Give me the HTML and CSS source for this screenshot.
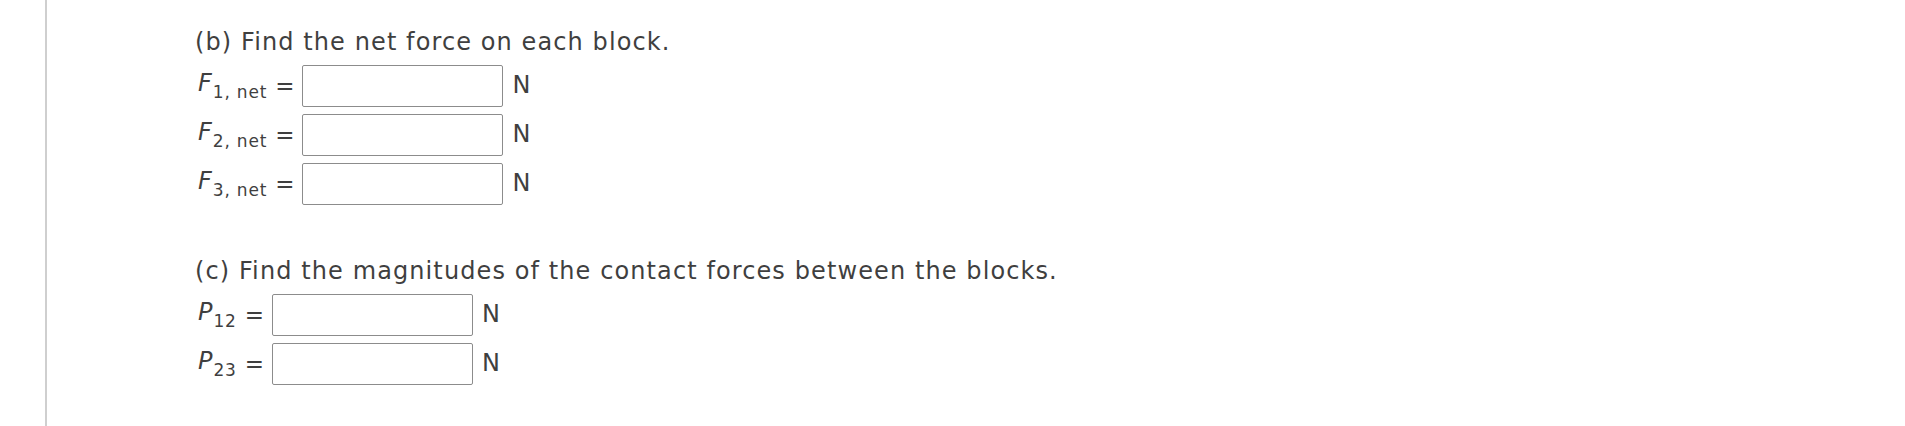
FILE: index.html
```html
<!DOCTYPE html>
<html lang="en">
<head>
<meta charset="utf-8">
<title>Net force on blocks</title>
<link rel="stylesheet" href="styles.css">
</head>
<body>
<div class="sheet">
  <section class="part part-b">
    <p class="prompt">(b) Find the net force on each block.</p>
    <div class="answers">
      <div class="answer">
        <span class="label"><i class="sym">F</i><sub class="idx">1, net</sub><span class="eq">=</span></span>
        <input class="field" type="text">
        <span class="unit">N</span>
      </div>
      <div class="answer">
        <span class="label"><i class="sym">F</i><sub class="idx">2, net</sub><span class="eq">=</span></span>
        <input class="field" type="text">
        <span class="unit">N</span>
      </div>
      <div class="answer">
        <span class="label"><i class="sym">F</i><sub class="idx">3, net</sub><span class="eq">=</span></span>
        <input class="field" type="text">
        <span class="unit">N</span>
      </div>
    </div>
  </section>
  <section class="part part-c">
    <p class="prompt">(c) Find the magnitudes of the contact forces between the blocks.</p>
    <div class="answers">
      <div class="answer">
        <span class="label"><i class="sym">P</i><sub class="idx">12</sub><span class="eq">=</span></span>
        <input class="field" type="text">
        <span class="unit">N</span>
      </div>
      <div class="answer">
        <span class="label"><i class="sym">P</i><sub class="idx">23</sub><span class="eq">=</span></span>
        <input class="field" type="text">
        <span class="unit">N</span>
      </div>
    </div>
  </section>
</div>
</body>
</html>
```

FILE: styles.css
```css
html, body {
  margin: 0;
  padding: 0;
  background: #ffffff;
}

body {
  font-family: "DejaVu Sans", Verdana, sans-serif;
  color: #3f3f3f;
}

/* question panel with a thin rule down its left side */
.sheet {
  margin-left: 45px;
  border-left: 2px solid #cfcfcf;
  min-height: 426px;
  box-sizing: border-box;
  padding-left: 148px;
  padding-top: 27px;
}

.part {
  display: flex;
  flex-direction: column;
}

.part-c {
  margin-top: 51px;
}

.prompt {
  margin: 0;
  font-size: 24px;
  letter-spacing: 1.1px;
  line-height: 30px;
}

.answers {
  display: flex;
  flex-direction: column;
  gap: 7px;
  margin-top: 8px;
}

.answer {
  display: flex;
  align-items: center;
  height: 42px;
}

/* math label: italic symbol, subscript, equals sign */
.label {
  font-size: 23px;
  white-space: nowrap;
  padding-left: 3px;
  margin-right: 8px;
  line-height: 1;
}

.sym {
  font-style: italic;
  font-size: 24px;
}

.idx {
  font-size: 17px;
  letter-spacing: 0.8px;
  vertical-align: -7px;
  margin-left: 1px;
}

.eq {
  display: inline-block;
  margin-left: 8px;
  vertical-align: -3px;
}

.field {
  box-sizing: border-box;
  width: 201px;
  height: 42px;
  margin: 0;
  border: 1px solid #8c8c8c;
  border-radius: 2px;
  background: #ffffff;
  padding: 0 6px;
  font: inherit;
  font-size: 20px;
  outline: none;
}

.unit {
  font-size: 24px;
  line-height: 1;
  margin-left: 9px;
  margin-top: -3px;
}
```
